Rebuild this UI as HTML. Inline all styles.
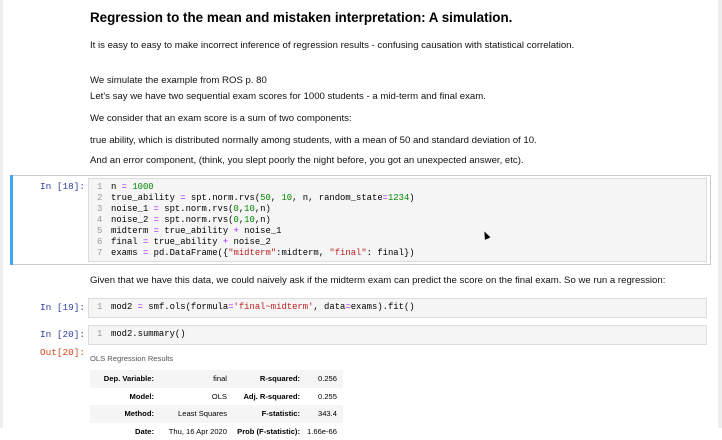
<!DOCTYPE html>
<html><head><style>
body{margin:0;width:722px;height:428px;overflow:hidden;background:#fff;font-family:"Liberation Sans",sans-serif;position:relative}
.edgeL{position:absolute;left:0;top:0;width:3px;height:428px;background:#eee}
.edgeR{position:absolute;right:0;top:0;width:4px;height:428px;background:#eee}
.t{position:absolute;left:90px;font-size:9.6px;color:#111;white-space:nowrap}
h1{position:absolute;left:90px;top:10px;margin:0;font-size:13.4px;font-weight:bold;color:#000}
.sel{position:absolute;left:10px;top:175px;width:701px;height:90px;border:1px solid #ccc;box-sizing:border-box}
.bar{position:absolute;left:10px;top:175px;width:3px;height:90px;background:#42a5f5}
.box{position:absolute;left:88px;width:619px;background:#f5f5f5;border:1px solid #ddd;box-sizing:border-box}
.p{position:absolute;font-family:"Liberation Mono",monospace;font-size:9.4px;white-space:pre}
.in{color:#303f9f;left:40px}
.out{color:#d84315;left:40px}
.code{position:absolute;font-family:"Liberation Mono",monospace;font-size:8.9px;line-height:11px;white-space:pre;color:#000}
.ln{color:#999;left:97px}
.o{color:#aa22ff}.n{color:#080}.s{color:#ba2121}
table{position:absolute;left:90px;top:370px;border-collapse:collapse;font-size:7.6px;color:#000;white-space:nowrap}
td{height:17.5px;padding:0 6px 0 0;text-align:right}
tr:nth-child(odd){background:#f5f5f5}
td.b{font-weight:bold}
</style></head><body>
<div class="edgeL"></div><div class="edgeR"></div>
<h1>Regression to the mean and mistaken interpretation: A simulation.</h1>
<div class="t" style="top:40px">It is easy to easy to make incorrect inference of regression results - confusing causation with statistical correlation.</div>
<div class="t" style="top:75px">We simulate the example from ROS p. 80</div>
<div class="t" style="top:91px">Let's say we have two sequential exam scores for 1000 students - a mid-term and final exam.</div>
<div class="t" style="top:113px">We consider that an exam score is a sum of two components:</div>
<div class="t" style="top:135px">true ability, which is distributed normally among students, with a mean of 50 and standard deviation of 10.</div>
<div class="t" style="top:155px">And an error component, (think, you slept poorly the night before, you got an unexpected answer, etc).</div>
<div class="sel"></div><div class="bar"></div>
<div class="box" style="top:178px;height:84px"></div>
<div class="p in" style="top:181px">In [18]:</div>
<div class="code ln" style="top:182px">1
2
3
4
5
6
7</div>
<div class="code" style="left:111px;top:182px">n <span class="o">=</span> <span class="n">1000</span>
true_ability <span class="o">=</span> spt.norm.rvs(<span class="n">50</span>, <span class="n">10</span>, n, random_state<span class="o">=</span><span class="n">1234</span>)
noise_1 <span class="o">=</span> spt.norm.rvs(<span class="n">0</span>,<span class="n">10</span>,n)
noise_2 <span class="o">=</span> spt.norm.rvs(<span class="n">0</span>,<span class="n">10</span>,n)
midterm <span class="o">=</span> true_ability <span class="o">+</span> noise_1
final <span class="o">=</span> true_ability <span class="o">+</span> noise_2
exams <span class="o">=</span> pd.DataFrame({<span class="s">"midterm"</span>:midterm, <span class="s">"final"</span>: final})</div>
<div style="position:absolute;left:483px;top:231px;width:0;height:0;border-left:3px solid transparent;border-right:3px solid transparent;border-bottom:8px solid #000;transform:rotate(-25deg)"></div>
<div class="t" style="top:275px">Given that we have this data, we could naively ask if the midterm exam can predict the score on the final exam. So we run a regression:</div>
<div class="box" style="top:298px;height:20px"></div>
<div class="p in" style="top:302px">In [19]:</div>
<div class="code ln" style="top:302px">1</div>
<div class="code" style="left:111px;top:302px">mod2 <span class="o">=</span> smf.ols(formula<span class="o">=</span><span class="s">'final~midterm'</span>, data<span class="o">=</span>exams).fit()</div>
<div class="box" style="top:325px;height:20px"></div>
<div class="p in" style="top:329px">In [20]:</div>
<div class="code ln" style="top:329px">1</div>
<div class="code" style="left:111px;top:329px">mod2.summary()</div>
<div class="p out" style="top:347px">Out[20]:</div>
<div class="t" style="top:354px;font-size:7.6px;color:#555">OLS Regression Results</div>
<table>
<tr><td class="b" style="width:64px">Dep. Variable:</td><td style="width:67px">final</td><td class="b" style="width:67px">R-squared:</td><td style="width:31px">0.256</td></tr>
<tr><td class="b">Model:</td><td>OLS</td><td class="b">Adj. R-squared:</td><td>0.255</td></tr>
<tr><td class="b">Method:</td><td>Least Squares</td><td class="b">F-statistic:</td><td>343.4</td></tr>
<tr><td class="b">Date:</td><td>Thu, 16 Apr 2020</td><td class="b">Prob (F-statistic):</td><td>1.66e-66</td></tr>
</table>
</body></html>
